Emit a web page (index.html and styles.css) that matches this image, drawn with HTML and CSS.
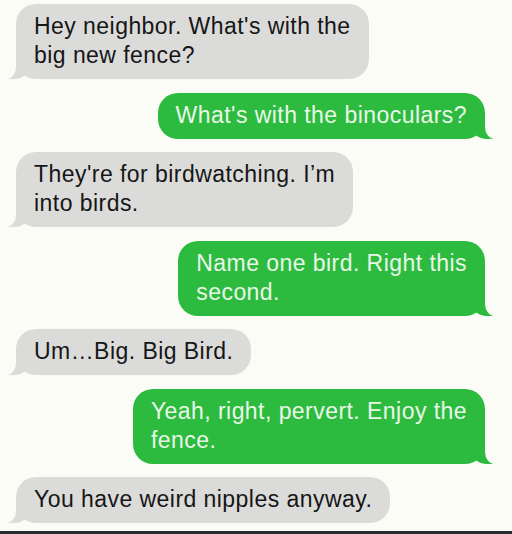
FILE: index.html
```html
<!DOCTYPE html>
<html lang="en">
<head>
<meta charset="utf-8">
<title>Messages</title>
<link rel="stylesheet" href="styles.css">
</head>
<body>
<main class="thread">
  <div class="bubble in">Hey neighbor. What's with the<br>big new fence?</div>
  <div class="bubble out">What's with the binoculars?</div>
  <div class="bubble in">They're for birdwatching. I’m<br>into birds.</div>
  <div class="bubble out">Name one bird. Right this<br>second.</div>
  <div class="bubble in">Um…Big. Big Bird.</div>
  <div class="bubble out">Yeah, right, pervert. Enjoy the<br>fence.</div>
  <div class="bubble in">You have weird nipples anyway.</div>
</main>
<div class="bottom-bar"></div>
</body>
</html>
```
FILE: styles.css
```css
html, body {
  margin: 0;
  padding: 0;
}
body {
  background: #fcfcf7;
  font-family: "Liberation Sans", Arial, sans-serif;
  height: 534px;
  display: flex;
  flex-direction: column;
  overflow: hidden;
}
.thread {
  display: flex;
  flex-direction: column;
  gap: 13.5px;
  padding: 4px 27px 0 16px;
}
.bubble {
  position: relative;
  font-size: 23px;
  letter-spacing: 0.45px;
  line-height: 29px;
  padding: 8px 18px 9px 18px;
  border-radius: 20px;
  max-width: 420px;
}
.in {
  align-self: flex-start;
  background: #dbdcda;
  color: #161616;
}
.out {
  align-self: flex-end;
  background: #2dbb3f;
  color: #e9f7e8;
}
.bubble::before,
.bubble::after {
  content: "";
  position: absolute;
  bottom: 0;
  height: 22px;
}
.in::before {
  left: -8px;
  width: 22px;
  background: #dbdcda;
  border-bottom-right-radius: 16px 14px;
}
.in::after {
  left: -12px;
  width: 12px;
  background: #fcfcf7;
  border-bottom-right-radius: 10px 12px;
}
.out::before {
  right: -8px;
  width: 22px;
  background: #2dbb3f;
  border-bottom-left-radius: 16px 14px;
}
.out::after {
  right: -12px;
  width: 12px;
  background: #fcfcf7;
  border-bottom-left-radius: 10px 12px;
}
.bottom-bar {
  margin-top: auto;
  height: 3px;
  background: #2b2b2b;
}
```
